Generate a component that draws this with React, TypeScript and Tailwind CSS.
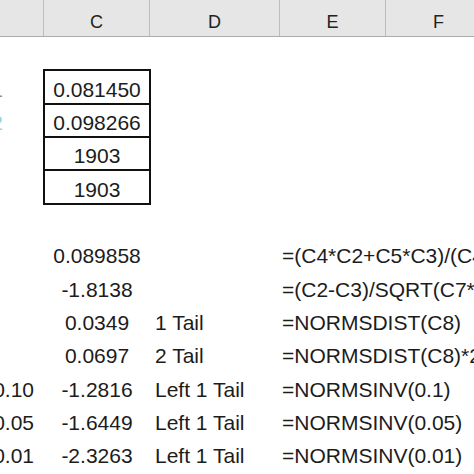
const COLS = ["B", "C", "D", "E", "F"];

type Row = {
  b?: string;
  bTone?: string;
  c?: string;
  boxed?: boolean;
  d?: string;
  e?: string;
};

const ROWS: Row[] = [
  {},
  { b: "p1", bTone: "text-[#8a8a8a]", c: "0.081450", boxed: true },
  { b: "p2", bTone: "text-[#9fd3cf]", c: "0.098266", boxed: true },
  { c: "1903", boxed: true },
  { c: "1903", boxed: true },
  {},
  { c: "0.089858", e: "=(C4*C2+C5*C3)/(C4+C5)" },
  { c: "-1.8138", e: "=(C2-C3)/SQRT(C7*(1-C7)*(1/C4+1/C5))" },
  { c: "0.0349", d: "1 Tail", e: "=NORMSDIST(C8)" },
  { c: "0.0697", d: "2 Tail", e: "=NORMSDIST(C8)*2" },
  { b: "0.10", c: "-1.2816", d: "Left 1 Tail", e: "=NORMSINV(0.1)" },
  { b: "0.05", c: "-1.6449", d: "Left 1 Tail", e: "=NORMSINV(0.05)" },
  { b: "0.01", c: "-2.3263", d: "Left 1 Tail", e: "=NORMSINV(0.01)" },
  {},
];

export default function App() {
  return (
    <div className="relative h-[474px] w-[474px] overflow-hidden bg-white font-['Liberation_Sans',Arial,sans-serif] text-[#1c1c1c]">
      <div className="ml-[-62px] w-[554px]">
        {/* column headers */}
        <div className="grid h-[37px] grid-cols-[106px_106px_130px_106px_106px] border-b border-[#acacac] bg-[#e6e6e6]">
          {COLS.map((c) => (
            <div key={c} className="flex items-end justify-center border-r border-[#bdbdbd] pb-[4px] text-[18px] leading-[20px] text-[#222]">
              {c}
            </div>
          ))}
        </div>

        {/* sheet rows */}
        {ROWS.map((r, i) => (
          <div key={i} className="grid h-[33.333px] grid-cols-[106px_106px_130px_106px_106px] text-[21px] leading-[24px]">
            <div className={`flex items-end justify-end whitespace-nowrap pb-[2px] ${r.b && r.b.startsWith("p") ? "pr-[41px]" : "pr-[10px]"} ${r.bTone ?? ""}`}>
              {r.b}
            </div>
            <div className={`flex items-end justify-center whitespace-nowrap pb-[2px] ${r.boxed ? "outline-2 -outline-offset-1 outline-[#111]" : ""}`}>
              {r.c}
            </div>
            <div className="flex items-end whitespace-nowrap pb-[2px] pl-[5px]">{r.d}</div>
            <div className="flex items-end overflow-visible whitespace-nowrap pb-[2px] pl-[2px]">{r.e}</div>
            <div />
          </div>
        ))}
      </div>
    </div>
  );
}
